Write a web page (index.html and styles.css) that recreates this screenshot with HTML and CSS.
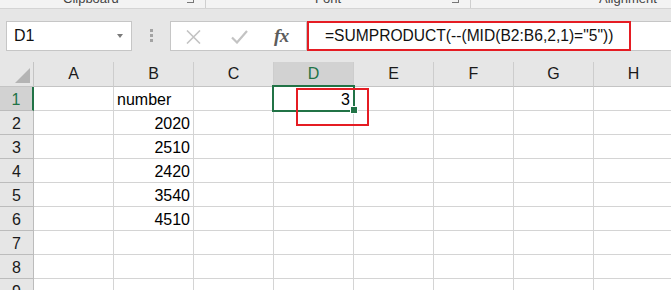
FILE: index.html
```html
<!DOCTYPE html>
<html>
<head>
<meta charset="utf-8">
<link rel="stylesheet" href="styles.css">
</head>
<body>
<div class="ribbon">
  <div class="group g1"><span class="glabel">Clipboard</span><span class="launcher"></span></div>
  <div class="group g2"><span class="glabel">Font</span><span class="launcher"></span></div>
  <div class="group g3"><span class="glabel">Alignment</span></div>
</div>
<div class="fbar">
  <div class="namebox"><span class="nbtext">D1</span><span class="dd"></span></div>
  <div class="grip"><i></i><i></i><i></i></div>
  <div class="btns">
    <svg class="ic-x" width="15" height="14" viewBox="0 0 15 14"><path d="M1 0.5 L14 13.5 M14 0.5 L1 13.5" stroke="#c3c3c3" stroke-width="1.6" fill="none"/></svg>
    <svg class="ic-ok" width="17" height="14" viewBox="0 0 17 14"><path d="M1 7.5 L6 12.5 L16 1" stroke="#c3c3c3" stroke-width="2.2" fill="none"/></svg>
    <span class="fx">fx</span>
  </div>
  <div class="finput"><span class="ftext">=SUMPRODUCT(--(MID(B2:B6,2,1)="5"))</span><div class="annot-f"></div></div>
</div>
<div class="sheet">
  <div class="corner"><span class="tri"></span></div>
  <div class="ch">A</div><div class="ch">B</div><div class="ch">C</div><div class="ch act">D</div><div class="ch">E</div><div class="ch">F</div><div class="ch">G</div><div class="ch">H</div>

  <div class="rh act">1</div>
  <div class="c"></div><div class="c">number</div><div class="c"></div>
  <div class="c num d1">3<div class="sel"><span class="handle"></span></div><div class="annot-c"></div></div>
  <div class="c"></div><div class="c"></div><div class="c"></div><div class="c"></div>

  <div class="rh">2</div>
  <div class="c"></div><div class="c num">2020</div><div class="c"></div><div class="c"></div><div class="c"></div><div class="c"></div><div class="c"></div><div class="c"></div>

  <div class="rh">3</div>
  <div class="c"></div><div class="c num">2510</div><div class="c"></div><div class="c"></div><div class="c"></div><div class="c"></div><div class="c"></div><div class="c"></div>

  <div class="rh">4</div>
  <div class="c"></div><div class="c num">2420</div><div class="c"></div><div class="c"></div><div class="c"></div><div class="c"></div><div class="c"></div><div class="c"></div>

  <div class="rh">5</div>
  <div class="c"></div><div class="c num">3540</div><div class="c"></div><div class="c"></div><div class="c"></div><div class="c"></div><div class="c"></div><div class="c"></div>

  <div class="rh">6</div>
  <div class="c"></div><div class="c num">4510</div><div class="c"></div><div class="c"></div><div class="c"></div><div class="c"></div><div class="c"></div><div class="c"></div>

  <div class="rh">7</div>
  <div class="c"></div><div class="c"></div><div class="c"></div><div class="c"></div><div class="c"></div><div class="c"></div><div class="c"></div><div class="c"></div>

  <div class="rh">8</div>
  <div class="c"></div><div class="c"></div><div class="c"></div><div class="c"></div><div class="c"></div><div class="c"></div><div class="c"></div><div class="c"></div>

  <div class="rh">9</div>
  <div class="c"></div><div class="c"></div><div class="c"></div><div class="c"></div><div class="c"></div><div class="c"></div><div class="c"></div><div class="c"></div>
</div>
</body>
</html>
```

FILE: styles.css
```css
* { box-sizing: border-box; }
html, body {
  margin: 0;
  padding: 0;
  width: 671px;
  height: 290px;
  overflow: hidden;
  background: #e6e6e6;
  font-family: "Liberation Sans", Arial, sans-serif;
}

/* ribbon strip (cut off at top) */
.ribbon {
  display: flex;
  height: 9px;
  background: #f3f3f3;
  border-bottom: 1px solid #d4d4d4;
  overflow: hidden;
}
.group {
  display: flex;
  align-items: flex-start;
  height: 8px;
  border-right: 1px solid #cfcfcf;
}
.g1 { width: 206px; padding-left: 63px; }
.g2 { width: 265px; padding-left: 109px; }
.g3 { flex: 1; padding-left: 128px; border-right: none; }
.glabel {
  font-size: 13px;
  line-height: 13px;
  margin-top: -8px;
  color: #444;
  white-space: nowrap;
}
.launcher {
  margin-left: auto;
  margin-right: 11px;
  margin-top: -4px;
  width: 7px;
  height: 7px;
  border-right: 1px solid #777;
  border-bottom: 1px solid #777;
}

/* formula bar */
.fbar {
  display: flex;
  align-items: flex-start;
  height: 53px;
  padding-top: 12px;
  padding-left: 6px;
}
.namebox {
  display: flex;
  align-items: center;
  width: 126px;
  height: 30px;
  background: #fff;
  border: 1px solid #c6c6c6;
  padding: 0 8px 0 7px;
  font-size: 16px;
  color: #111;
}
.dd {
  margin-left: auto;
  width: 0;
  height: 0;
  border-left: 3.5px solid transparent;
  border-right: 3.5px solid transparent;
  border-top: 4px solid #7a7a7a;
}
.grip {
  display: flex;
  flex-direction: column;
  gap: 2px;
  margin-left: 18px;
  margin-top: 8px;
}
.grip i {
  display: block;
  width: 3px;
  height: 3px;
  background: #a3a3a3;
}
.btns {
  display: flex;
  align-items: center;
  margin-left: 17px;
  width: 137px;
  height: 30px;
  background: #fff;
  border: 1px solid #c6c6c6;
  padding-left: 15px;
}
.ic-x { display: block; margin-top: 1px; }
.ic-ok { display: block; margin-left: 30px; margin-top: 1px; }
.fx {
  margin-left: 26px;
  font-family: "Liberation Serif", "Times New Roman", serif;
  font-style: italic;
  font-weight: bold;
  font-size: 19px;
  color: #5c5c5c;
  letter-spacing: -0.5px;
}
.finput {
  position: relative;
  display: flex;
  align-items: center;
  flex: 1;
  height: 30px;
  background: #fff;
  border-top: 1px solid #c6c6c6;
  border-bottom: 1px solid #c6c6c6;
  padding-left: 18px;
}
.ftext {
  font-size: 15.6px;
  color: #111;
  white-space: nowrap;
}
.annot-f {
  position: absolute;
  left: 0;
  top: -1px;
  width: 324px;
  height: 30px;
  border: 2px solid #e51c23;
}

/* sheet */
.sheet {
  display: grid;
  grid-template-columns: 34px repeat(8, 80px);
  grid-template-rows: 25px repeat(9, 24px);
  background: #fff;
  font-size: 16px;
}
.corner {
  display: flex;
  justify-content: flex-end;
  align-items: flex-end;
  padding: 0 3px 3px 0;
  background: #e6e6e6;
  border-right: 1px solid #c4c4c4;
  border-bottom: 1px solid #c4c4c4;
}
.tri {
  width: 0;
  height: 0;
  border-left: 15px solid transparent;
  border-bottom: 15px solid #b4b4b4;
}
.ch {
  background: #e6e6e6;
  border-right: 1px solid #cdcdcd;
  border-bottom: 1px solid #c4c4c4;
  text-align: center;
  line-height: 24px;
  color: #1a1a1a;
}
.ch.act {
  background: #d2d2d2;
  color: #217346;
  border-bottom: 2px solid #217346;
  line-height: 23px;
}
.rh {
  background: #e6e6e6;
  border-right: 1px solid #bcbcbc;
  border-bottom: 1px solid #bcbcbc;
  text-align: center;
  line-height: 20px;
  padding-top: 3px;
  color: #1a1a1a;
}
.rh.act {
  background: #d2d2d2;
  color: #217346;
  border-right: 2px solid #217346;
}
.c {
  border-right: 1px solid #d4d4d4;
  border-bottom: 1px solid #d4d4d4;
  line-height: 20px;
  padding: 3px 3px 0 3px;
  color: #000;
  white-space: nowrap;
}
.num { text-align: right; }
.d1 { position: relative; }
.sel {
  position: absolute;
  top: -2px;
  left: -2px;
  right: -2px;
  bottom: -2px;
  border: 2px solid #217346;
}
.handle {
  position: absolute;
  right: -5px;
  bottom: -4px;
  width: 8px;
  height: 8px;
  background: #217346;
  border: 1px solid #fff;
}
.annot-c {
  position: absolute;
  left: 22px;
  top: 1px;
  width: 73px;
  height: 38px;
  border: 2px solid #e51c23;
}
```
